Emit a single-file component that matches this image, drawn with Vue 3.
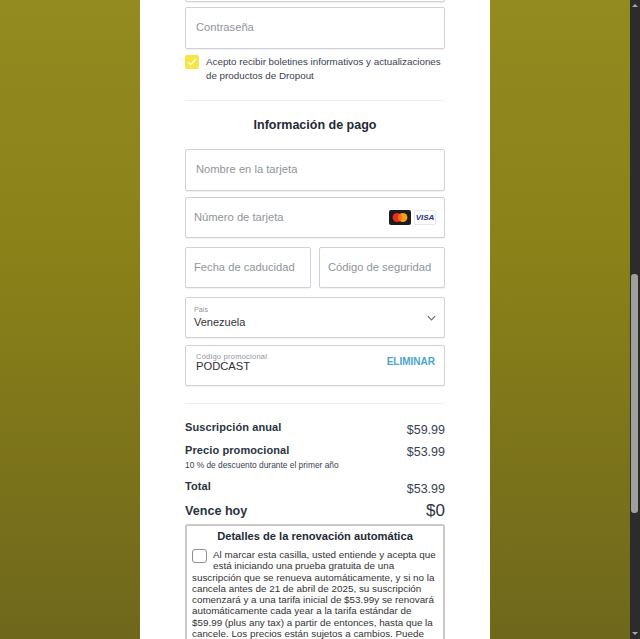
<script setup>
const summary = [
  { label: 'Suscripción anual', value: '$59.99', cls: 'row-annual' },
  { label: 'Precio promocional', value: '$53.99', cls: 'row-promo', note: '10 % de descuento durante el primer año' },
  { label: 'Total', value: '$53.99', cls: 'row-total' },
]
</script>

<template>
  <div class="window">
    <main class="page">
      <section class="card">
        <div class="field field-clipped"></div>
        <div class="field field-pass"><span class="ph">Contraseña</span></div>
        <label class="optin">
          <span class="tick">
            <svg width="10" height="8" viewBox="0 0 10 8"><path d="M1 4l2.7 2.6L9 1" fill="none" stroke="#fff9c8" stroke-width="1.6" /></svg>
          </span>
          <span class="optin-text">Acepto recibir boletines informativos y actualizaciones de productos de Dropout</span>
        </label>
        <hr class="rule rule-top" />
        <h2 class="title">Información de pago</h2>

        <div class="field field-name"><span class="ph">Nombre en la tarjeta</span></div>
        <div class="field field-number">
          <span class="ph">Número de tarjeta</span>
          <span class="cards">
            <svg class="mc" width="22" height="15" viewBox="0 0 22 15">
              <rect width="22" height="15" rx="2" fill="#1c1c1c" />
              <circle cx="8.2" cy="7.5" r="4.6" fill="#e8301f" />
              <circle cx="13.8" cy="7.5" r="4.6" fill="#f79e1b" />
              <path d="M11 3.8a4.6 4.6 0 0 1 0 7.4a4.6 4.6 0 0 1 0-7.4z" fill="#f26a1b" />
            </svg>
            <span class="visa">VISA</span>
          </span>
        </div>
        <div class="split">
          <div class="field field-half"><span class="ph">Fecha de caducidad</span></div>
          <div class="field field-half"><span class="ph">Código de seguridad</span></div>
        </div>
        <div class="field field-country">
          <div class="stack">
            <span class="mini">País</span>
            <span class="val">Venezuela</span>
          </div>
          <svg class="chev" width="9" height="6" viewBox="0 0 10 6"><path d="M1 1l4 4 4-4" fill="none" stroke="#6b7075" stroke-width="1.3" /></svg>
        </div>
        <div class="field field-code">
          <div class="stack stack-code">
            <span class="mini mini-code">Código promocional</span>
            <span class="val val-code">PODCAST</span>
          </div>
          <span class="remove">ELIMINAR</span>
        </div>
        <hr class="rule rule-bottom" />

        <div v-for="r in summary" :key="r.label" class="row" :class="r.cls">
          <div>
            <div class="row-label">{{ r.label }}</div>
            <div v-if="r.note" class="row-note">{{ r.note }}</div>
          </div>
          <div class="row-value">{{ r.value }}</div>
        </div>
        <div class="row row-due">
          <div class="due-label">Vence hoy</div>
          <div class="due-value">$0</div>
        </div>

        <div class="renew">
          <h3 class="renew-title">Detalles de la renovación automática</h3>
          <p class="renew-text"><span class="box"></span>Al marcar esta casilla, usted entiende y acepta que está iniciando una prueba gratuita de una suscripción que se renueva automáticamente, y si no la cancela antes de 21 de abril de 2025, su suscripción comenzará y a una tarifa inicial de $53.99y se renovará automáticamente cada year a la tarifa estándar de $59.99 (plus any tax) a partir de entonces, hasta que la cancele. Los precios están sujetos a cambios. Puede</p>
        </div>
      </section>
    </main>
    <div class="scrollbar">
      <span class="arrow arrow-up"></span>
      <span class="thumb"></span>
      <span class="arrow arrow-down"></span>
    </div>
  </div>
</template>

<style>
html, body { margin: 0; overflow: hidden; }
</style>

<style scoped>
.window {
  display: flex;
  width: 640px;
  height: 639px;
  overflow: hidden;
  font-family: "Liberation Sans", Arial, sans-serif;
  color: #2b3440;
}
.page {
  flex: 1;
  height: 639px;
  overflow: hidden;
  background: linear-gradient(180deg, #938a20 0%, #8a8119 40%, #6f671c 100%);
}
.card {
  box-sizing: border-box;
  width: 350px;
  height: 639px;
  margin-left: 140px;
  padding: 0 45px;
  background: #fff;
  overflow: hidden;
}
.field {
  box-sizing: border-box;
  display: flex;
  align-items: center;
  border: 1px solid #cfd2d6;
  border-radius: 2px;
  background: #fff;
  box-shadow: 0 1px 1px rgba(0, 0, 0, 0.06);
}
.field-clipped { height: 42px; margin-top: -40px; }
.field-pass { height: 42px; margin-top: 5px; padding-left: 10px; }
.ph { font-size: 11.2px; color: #8f959b; margin-top: -2px; }
.optin { display: flex; gap: 7px; margin-top: 6px; }
.tick {
  flex: none;
  display: flex;
  align-items: center;
  justify-content: center;
  width: 14px;
  height: 14px;
  border-radius: 2px;
  background: #f7e545;
}
.optin-text { font-size: 9.8px; line-height: 14px; color: #3a4350; }
.rule { height: 1px; margin: 0; border: 0; background: #f0f0f0; }
.rule-top { margin-top: 17px; }
.title {
  margin: 16px 0 0;
  height: 16px;
  font-size: 12.5px;
  line-height: 16px;
  font-weight: 700;
  text-align: center;
  color: #1f2a37;
}
.field-name { height: 42px; margin-top: 16px; padding-left: 10px; }
.field-number { height: 41px; margin-top: 6px; padding: 0 8px; justify-content: space-between; }
.cards { display: flex; align-items: center; gap: 3px; }
.mc { display: block; }
.visa {
  box-sizing: border-box;
  width: 22px;
  height: 15px;
  border: 1px solid #e6e8ee;
  border-radius: 2px;
  font-size: 8px;
  line-height: 13px;
  font-weight: 700;
  font-style: italic;
  text-align: center;
  color: #27337e;
}
.split { display: grid; grid-template-columns: 126px 126px; gap: 8px; margin-top: 9px; }
.field-half { height: 41px; padding-left: 8px; }
.field-country { height: 41px; margin-top: 9px; padding: 0 8px; justify-content: space-between; }
.stack { display: flex; flex-direction: column; }
.mini { font-size: 7px; line-height: 9px; color: #8f959b; }
.val { font-size: 11px; line-height: 15px; color: #333; margin-top: 1px; }
.field-code { height: 41px; margin-top: 7px; padding: 0 9px 0 10px; justify-content: space-between; }
.stack-code { margin-top: -6px; }
.mini-code { font-size: 7.5px; line-height: 8px; letter-spacing: 0.25px; }
.val-code { font-size: 11.2px; line-height: 12px; margin-top: -1px; color: #2d2f33; }
.remove { font-size: 10px; font-weight: 700; color: #4aa6cc; margin-top: -8px; }
.rule-bottom { margin-top: 17px; }
.row { display: flex; justify-content: space-between; align-items: flex-start; }
.row-label { font-size: 11px; line-height: 14px; font-weight: 700; color: #2b3440; letter-spacing: 0.1px; }
.row-note { font-size: 8.4px; line-height: 11px; margin-top: 3px; color: #3a4350; }
.row-value { font-size: 12.5px; line-height: 15px; color: #3a4350; }
.row-annual { margin-top: 16px; }
.row-annual .row-value { margin-top: 3px; }
.row-promo { margin-top: 5px; }
.row-promo .row-value { margin-top: 2px; }
.row-total { margin-top: 8px; }
.row-total .row-value { margin-top: 3px; }
.row-due { margin-top: 4px; align-items: center; height: 20px; }
.due-label { font-size: 12.6px; font-weight: 700; color: #2b3440; }
.due-value { font-size: 17px; color: #2b3440; }
.renew {
  box-sizing: border-box;
  margin-top: 3px;
  padding: 3px 5px 4px;
  border: 2px solid #c9c9c9;
  border-radius: 3px;
}
.renew-title {
  margin: 0 0 5px;
  font-size: 11.15px;
  line-height: 15px;
  font-weight: 700;
  text-align: center;
  color: #1f2a37;
}
.renew-text { margin: 0; font-size: 9.85px; line-height: 11.3px; color: #333; }
.box {
  float: left;
  box-sizing: border-box;
  width: 15px;
  height: 14px;
  margin: 0 6px 0 0;
  border: 1px solid #8f8f8f;
  border-radius: 3px;
  background: #fff;
}
.scrollbar {
  position: relative;
  flex: none;
  display: flex;
  flex-direction: column;
  align-items: center;
  width: 10px;
  height: 639px;
  background: #2c2c2c;
}
.thumb {
  position: absolute;
  left: 1px;
  top: 274px;
  width: 7px;
  height: 239px;
  border-radius: 3px;
  background: #9f9f9b;
}
.arrow {
  position: absolute;
  left: 2px;
  width: 0;
  height: 0;
  border-left: 3px solid transparent;
  border-right: 3px solid transparent;
}
.arrow-up { top: 4px; border-bottom: 3px solid #a8a8a8; }
.arrow-down { bottom: 4px; border-top: 3px solid #a8a8a8; }
</style>
